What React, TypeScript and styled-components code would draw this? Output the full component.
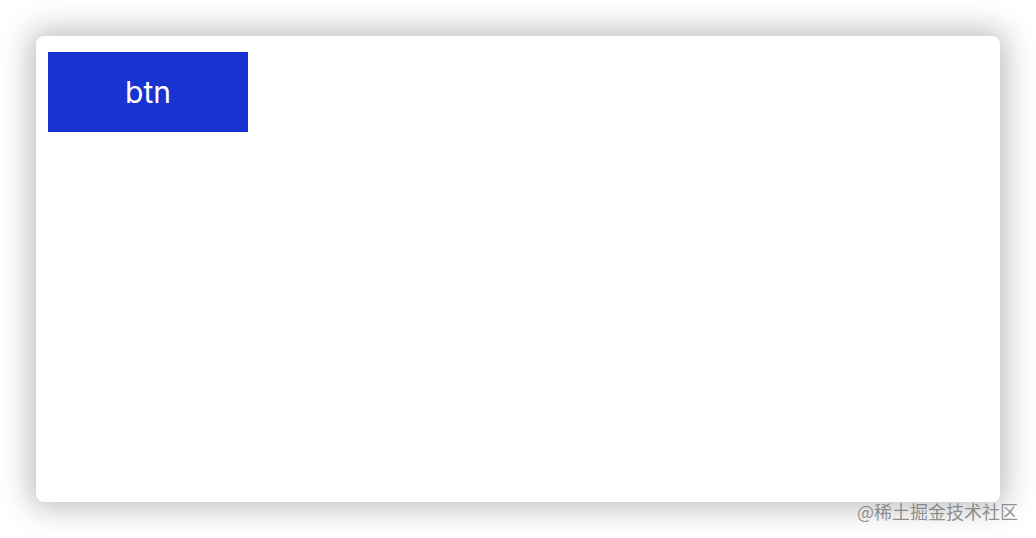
import React from "react";
import styled, { createGlobalStyle } from "styled-components";

const GlobalStyle = createGlobalStyle`
  html, body {
    margin: 0;
    padding: 0;
    background: #ffffff;
  }
  body {
    font-family: Inter, "Noto Sans", "Noto Sans CJK SC", sans-serif;
  }
`;

const Page = styled.div`
  position: relative;
  width: 1036px;
  height: 538px;
  box-sizing: border-box;
  padding: 36px;
  overflow: hidden;
`;

const Card = styled.div`
  width: 964px;
  height: 466px;
  box-sizing: border-box;
  padding: 16px 12px;
  background: #ffffff;
  border-radius: 8px;
  box-shadow: 0 0 30px 6px rgba(0, 0, 0, 0.26);
`;

const Button = styled.button`
  width: 200px;
  height: 80px;
  border: none;
  border-radius: 0;
  background: #1733d0;
  color: #ffffff;
  font-family: Inter, "Noto Sans", sans-serif;
  font-size: 30px;
  padding: 0;
  display: flex;
  align-items: center;
  justify-content: center;
`;

const Watermark = styled.span`
  position: absolute;
  right: 18px;
  bottom: 17px;
  font-family: "Noto Sans CJK SC", "Noto Sans", sans-serif;
  font-size: 18px;
  line-height: 20px;
  color: rgba(110, 110, 110, 0.75);
`;

export default function App() {
  return (
    <>
      <GlobalStyle />
      <Page>
        <Card>
          <Button>btn</Button>
        </Card>
        <Watermark>@稀土掘金技术社区</Watermark>
      </Page>
    </>
  );
}
